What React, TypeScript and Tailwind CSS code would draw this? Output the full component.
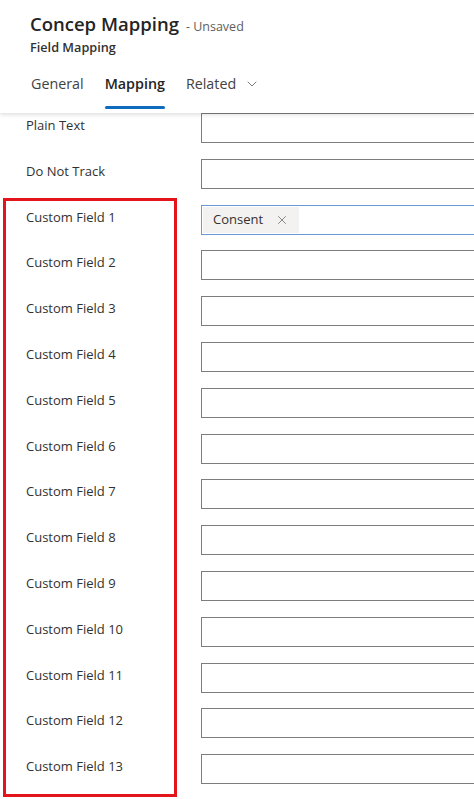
import { ChevronDown, X } from 'lucide-react';

const fields = [
  'Plain Text',
  'Do Not Track',
  ...Array.from({ length: 13 }, (_, i) => `Custom Field ${i + 1}`),
];

const tabs = ['General', 'Mapping', 'Related'];

function Header() {
  return (
    <div className="relative z-10 h-[113px] shrink-0 bg-white pl-[30px] shadow-[0_2px_4px_rgba(0,0,0,0.12)]">
      <div className="flex items-baseline gap-[7px] pt-[10px]">
        <span className="text-[18.5px] font-semibold leading-[28px] text-[#242424]">Concep Mapping</span>
        <span className="text-[12.5px] text-[#605e5c]">- Unsaved</span>
      </div>
      <div className="text-[12.7px] font-semibold leading-[18px] text-[#323130]">Field Mapping</div>
      <div className="mt-[12px] flex gap-[21px] pl-px">
        {tabs.map((tab) => {
          const active = tab === 'Mapping';
          return (
            <div key={tab} className="relative flex h-[32px] items-center gap-[8px]">
              <span className={`text-[14.3px] ${active ? 'font-semibold text-[#242424]' : 'text-[#424242]'}`}>{tab}</span>
              {tab === 'Related' && <ChevronDown className="h-4 w-4 text-[#616161]" strokeWidth={1.25} />}
              {active && <div className="absolute bottom-[-9px] left-0 right-0 h-[3px] rounded-full bg-[#0f6cbd]" />}
            </div>
          );
        })}
      </div>
    </div>
  );
}

function FieldRow({ label }: { label: string }) {
  const hasTag = label === 'Custom Field 1';
  return (
    <div className="flex h-[45.8px] shrink-0">
      <div className="w-[201px] shrink-0 pl-[26px] pt-[2px] text-[13px] leading-[20px] text-[#323130]">{label}</div>
      <div
        className={`-mr-4 flex h-[30px] flex-1 items-center border px-px ${
          hasTag ? 'border-[#6a9ad4]' : 'border-[#7f7d7b]'
        }`}
      >
        {hasTag && (
          <div className="flex h-[26px] items-center gap-[12px] bg-[#f3f2f1] pl-[10px] pr-[10px] text-[13px] text-[#323130]">
            Consent
            <X className="h-[14px] w-[14px] text-[#605e5c]" strokeWidth={1.25} />
          </div>
        )}
      </div>
    </div>
  );
}

export default function App() {
  return (
    <div
      className="flex h-[799px] w-[474px] flex-col overflow-hidden bg-white"
      style={{ fontFamily: '"Segoe UI", "Open Sans", "Noto Sans", sans-serif' }}
    >
      <Header />
      <div className="relative flex flex-col">
        {fields.map((f) => (
          <FieldRow key={f} label={f} />
        ))}
        {/* highlight around the custom fields column */}
        <div className="pointer-events-none absolute left-[3px] top-[85px] h-[599px] w-[174px] border-[3px] border-[#e3151a]" />
      </div>
    </div>
  );
}
